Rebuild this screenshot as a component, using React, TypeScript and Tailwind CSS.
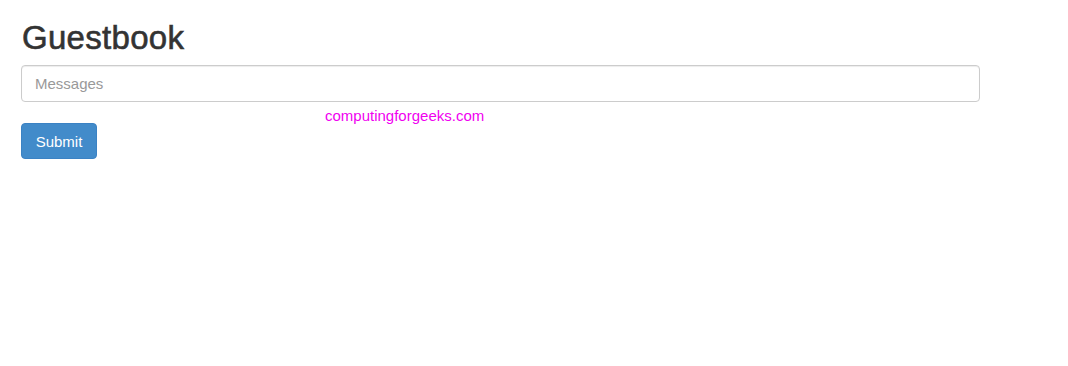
import React from "react";

export default function App() {
  return (
    <div className="relative w-[1068px] h-[366px] bg-white" style={{ fontFamily: '"Liberation Sans", Arial, sans-serif' }}>
      <div className="pl-[21px] pt-[18px]">
        <h1 className="pl-[1px] text-[33px] leading-[40px] font-normal tracking-[0.3px] text-[#333333] [-webkit-text-stroke:0.6px_#333333]">Guestbook</h1>
        <div className="mt-[7px] w-[959px] h-[37px] border border-[#cccccc] rounded-[4px] flex items-center px-[13px] pt-[2px] shadow-[inset_0_1px_1px_rgba(0,0,0,0.075)]">
          <span className="text-[15px] text-[#999999]">Messages</span>
        </div>
        <button className="mt-[21px] w-[76px] h-[36px] bg-[#428bca] border border-[#3b82c4] rounded-[4px] text-white text-[15px] flex items-center justify-center pt-[2px]">
          Submit
        </button>
      </div>
      <div className="absolute left-[325px] top-[107px] text-[15px] text-[#f000f0] leading-[18px]">computingforgeeks.com</div>
    </div>
  );
}
